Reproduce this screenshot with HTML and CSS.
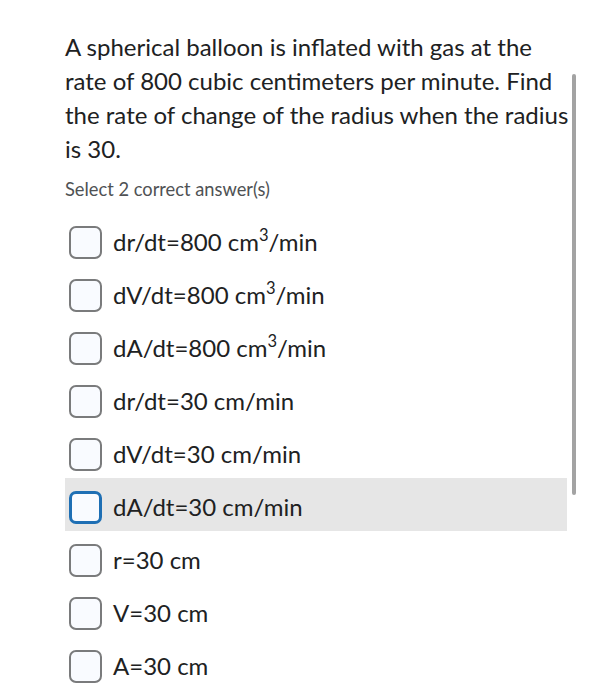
FILE: index.html
```html
<!DOCTYPE html>
<html>
<head>
<meta charset="utf-8">
<link rel="stylesheet" href="styles.css">
</head>
<body>
<div class="page">
  <div class="question">
    <p class="stem">A spherical balloon is inflated with gas at the rate of 800 cubic centimeters per minute. Find the rate of change of the radius when the radius is 30.</p>
    <p class="hint">Select 2 correct answer(s)</p>
    <div class="options">
      <label class="opt"><span class="box"></span><span class="txt">dr/dt=800 cm<sup>3</sup>/min</span></label>
      <label class="opt"><span class="box"></span><span class="txt">dV/dt=800 cm<sup>3</sup>/min</span></label>
      <label class="opt"><span class="box"></span><span class="txt">dA/dt=800 cm<sup>3</sup>/min</span></label>
      <label class="opt"><span class="box"></span><span class="txt">dr/dt=30 cm/min</span></label>
      <label class="opt"><span class="box"></span><span class="txt">dV/dt=30 cm/min</span></label>
      <label class="opt hover"><span class="box focus"></span><span class="txt">dA/dt=30 cm/min</span></label>
      <label class="opt"><span class="box"></span><span class="txt">r=30 cm</span></label>
      <label class="opt"><span class="box"></span><span class="txt">V=30 cm</span></label>
      <label class="opt"><span class="box"></span><span class="txt">A=30 cm</span></label>
    </div>
  </div>
  <div class="scrollbar"></div>
</div>
</body>
</html>
```
FILE: styles.css
```css
html, body {
  margin: 0;
  padding: 0;
  background: #ffffff;
}
body {
  font-family: Lato, "Noto Sans", sans-serif;
  color: #202122;
}
.page {
  position: relative;
  width: 604px;
  height: 700px;
  overflow: hidden;
}
.question {
  padding: 30px 33px 0 65px;
}
.stem {
  margin: 0;
  font-size: 24px;
  line-height: 34px;
}
.hint {
  margin: 11px 0 11.7px;
  font-size: 18.3px;
  line-height: 24px;
  color: #4f5254;
}
.options {
  display: flex;
  flex-direction: column;
  margin-right: 4px;
}
.opt {
  display: flex;
  align-items: center;
  height: 53px;
  padding: 13px 0 7px 4px;
  box-sizing: border-box;
}
.opt.hover {
  background: #e6e6e6;
}
.box {
  flex: none;
  width: 33px;
  height: 33px;
  box-sizing: border-box;
  border: 2px solid #7a7b7c;
  border-radius: 7px;
  background: #f9fbff;
  margin-right: 11px;
}
.box.focus {
  border: 3px solid #1e6fb4;
}
.txt {
  font-size: 24px;
  line-height: 30px;
  color: #202122;
}
.txt sup {
  font-size: 16.5px;
  line-height: 0;
  vertical-align: 10px;
}
.scrollbar {
  position: absolute;
  left: 572px;
  top: 74px;
  width: 4px;
  height: 421px;
  border-radius: 2px;
  background: #a3a3a3;
}
```
